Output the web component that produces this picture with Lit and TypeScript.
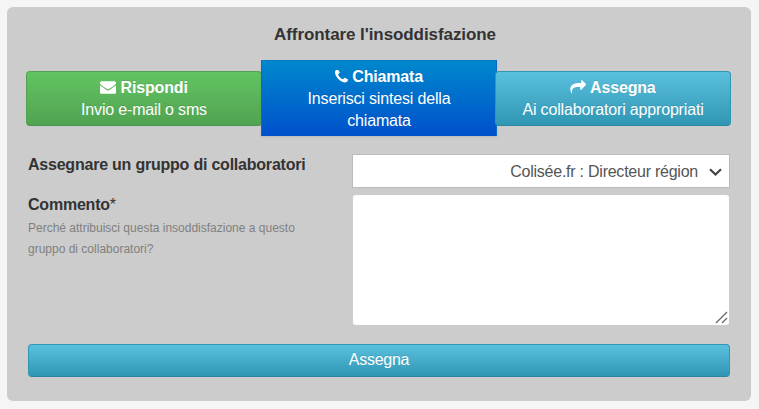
import { LitElement, html, css } from "lit";
import { customElement } from "lit/decorators.js";

@customElement("app-root")
export class AppRoot extends LitElement {
  static styles = css`
    :host {
      display: block;
      min-height: 409px;
      background: #f5f5f5;
      font-family: "Liberation Sans", Arial, sans-serif;
      color: #333;
      padding: 7px 8px 8px 7px;
      box-sizing: border-box;
    }

    .panel {
      background: #ccc;
      border-radius: 6px;
      height: 394px;
      padding: 0 21px 0 19px;
      box-sizing: border-box;
      overflow: hidden;
    }

    h3 {
      margin: 0;
      padding: 17px 0 0 14px;
      height: 53px;
      box-sizing: border-box;
      text-align: center;
      font-size: 17px;
      letter-spacing: -0.08px;
      line-height: 21px;
      font-weight: 700;
      color: #333;
    }

    .actions {
      display: flex;
      align-items: center;
      height: 76px;
    }

    .action {
      flex: none;
      width: 236px;
      height: 55px;
      box-sizing: border-box;
      border: 1px solid;
      border-radius: 4px;
      color: #fff;
      text-align: center;
      font-size: 16px;
      letter-spacing: -0.17px;
      line-height: 22px;
      padding-top: 5px;
      text-shadow: 0 -1px 0 rgba(0, 0, 0, 0.1);
    }

    .action b {
      display: block;
    }

    .action svg {
      width: 16px;
      height: 16px;
      fill: #fff;
      vertical-align: -2px;
    }

    .action svg.phone {
      width: 13px;
      height: 13px;
      vertical-align: -1px;
    }

    .green {
      background: linear-gradient(#62c462, #51a351);
      border-color: #51a351 #51a351 #4a934a;
    }

    .blue {
      position: relative;
      height: 76px;
      width: 236px;
      margin: 0 -2px 0 -1px;
      border-radius: 0;
      background: linear-gradient(#0088cc, #0051cc);
      border-color: #0a78c4 #0a6cc4 #0051cc;
      padding: 5px 30px 0;
      box-shadow: 0 1px 2px rgba(0, 0, 0, 0.1);
    }

    .cyan {
      position: relative;
      background: linear-gradient(#5bc0de, #2f96b4);
      border-color: #2f96b4 #2f96b4 #2a85a0;
    }

    .form {
      display: grid;
      grid-template-columns: 324px 378px;
      margin-top: 18px;
      padding-left: 2px;
    }

    .label {
      font-size: 16px;
      letter-spacing: -0.22px;
      line-height: 20px;
      font-weight: 700;
      color: #333;
    }

    .first {
      height: 41px;
      padding-top: 1px;
      box-sizing: border-box;
    }

    .hint {
      font-size: 12px;
      line-height: 21px;
      color: #808080;
      margin: 3px 0 0;
      width: 290px;
    }

    .req {
      font-weight: 400;
    }

    .select-wrap,
    .area-wrap {
      position: relative;
      height: 34px;
    }

    .area-wrap {
      height: 131px;
      padding-left: 1px;
    }

    select {
      display: block;
      width: 378px;
      height: 34px;
      box-sizing: border-box;
      appearance: none;
      background: #fff;
      border: 1px solid #bbb;
      border-radius: 0;
      padding: 0 31px 0 0;
      font-family: inherit;
      font-size: 16px;
      letter-spacing: -0.24px;
      color: #555;
      text-align-last: right;
      outline: none;
    }

    .chevron {
      position: absolute;
      right: 8px;
      top: 14px;
      width: 13px;
      height: 8px;
      fill: none;
      stroke: #444;
      stroke-width: 2.2;
      pointer-events: none;
    }

    textarea {
      display: block;
      width: 376px;
      height: 130px;
      box-sizing: border-box;
      background: #fff;
      border: 0;
      border-radius: 3px;
      margin: 0;
      padding: 6px;
      outline: none;
      resize: none;
      font-family: inherit;
    }

    .grip {
      position: absolute;
      right: 2px;
      bottom: 2px;
      width: 13px;
      height: 13px;
      stroke: #666;
      stroke-width: 1.3;
      pointer-events: none;
    }

    .submit {
      display: block;
      width: 702px;
      height: 33px;
      margin: 18px 0 0 2px;
      box-sizing: border-box;
      border: 1px solid #2f96b4;
      border-bottom-color: #2a85a0;
      border-radius: 4px;
      background: linear-gradient(#5bc0de, #2f96b4);
      color: #fff;
      font-family: inherit;
      font-size: 16px;
      letter-spacing: -0.25px;
      padding: 0 0 2px;
      text-shadow: 0 -1px 0 rgba(0, 0, 0, 0.1);
    }
  `;

  render() {
    return html`
      <div class="panel">
        <h3>Affrontare l'insoddisfazione</h3>
        <div class="actions">
          <div class="action green">
            <b
              ><svg viewBox="0 0 1792 1792">
                <path d="M1792 710v794q0 66-47 113t-113 47h-1472q-66 0-113-47t-47-113v-794q44 49 101 87 362 246 497 345 57 42 92.500 65.500t94.500 48 110 24.500h2q51 0 110-24.500t94.500-48 92.500-65.500q170-123 498-345 57-39 100-87zm0-294q0 79-49 151t-122 123q-376 261-468 325-10 7-42.500 30.500t-54 38-52 32.500-57.500 27-50 9h-2q-23 0-50-9t-57.500-27-52-32.500-54-38-42.500-30.500q-91-64-262-182.500t-205-142.500q-62-42-117-115.500t-55-136.500q0-78 41.500-130t118.500-52h1472q65 0 112.500 47t47.500 113z" />
              </svg>
              Rispondi</b
            >
            Invio e-mail o sms
          </div>
          <div class="action blue">
            <b
              ><svg class="phone" viewBox="192 192 1408 1408">
                <path d="M1600 1240q0 27-10 70.500t-21 68.500q-21 50-122 106-94 51-186 51-27 0-53-3.500t-57.500-12.500-47-14.500-55.500-20.500-49-18q-98-35-175-83-127-79-264-216t-216-264q-48-77-83-175-3-9-18-49t-20.500-55.500-14.500-47-12.500-57.500-3.500-53q0-92 51-186 56-101 106-122 25-11 68.500-21t70.500-10q14 0 21 3 18 6 53 76 11 19 30 54t35 63.500 31 53.500q3 4 17.500 25t21.500 35.500 7 28.500q0 20-28.500 50t-62 55-62 53-28.500 46q0 9 5 22.500t8.500 20.500 14 24 11.500 19q76 137 174 235t235 174q2 1 19 11.500t24 14 20.500 8.500 22.500 5q18 0 46-28.500t53-62 55-62 50-28.500q14 0 28.500 7t35.500 21.500 25 17.500q25 15 53.500 31t63 35 54 30q70 35 76 53 3 7 3 21z" />
              </svg>
              Chiamata</b
            >
            Inserisci sintesi della chiamata
          </div>
          <div class="action cyan">
            <b
              ><svg viewBox="0 0 1792 1792">
                <path d="M1792 640q0 26-19 45l-512 512q-19 19-45 19t-45-19-19-45v-256h-224q-98 0-175.500 6t-154 21.500-133 42.500-105.500 69.500-79 103-48 150.500-17 196q0 34 3 79 0 4 1.500 15.500t1.500 17.500q0 10-5.500 17t-15.500 7q-11 0-20-11.500t-15-27-12.500-27.500q-121-272-121-402 0-173 57-283 174-432 940-432h224v-256q0-26 19-45t45-19 45 19l512 512q19 19 19 45z" />
              </svg>
              Assegna</b
            >
            Ai collaboratori appropriati
          </div>
        </div>
        <div class="form">
          <div class="label first">Assegnare un gruppo di collaboratori</div>
          <div class="select-wrap">
            <select>
              <option>Colisée.fr : Directeur région</option>
            </select>
            <svg class="chevron" viewBox="0 0 13 8"><path d="M1 1.200l5.500 5.300L12 1.200" /></svg>
          </div>
          <div>
            <div class="label">Commento<span class="req">*</span></div>
            <p class="hint">
              Perché attribuisci questa insoddisfazione a questo gruppo di collaboratori?
            </p>
          </div>
          <div class="area-wrap">
            <textarea></textarea>
            <svg class="grip" viewBox="0 0 13 13"><path d="M1 12 12 1M7 12l5-5" /></svg>
          </div>
        </div>
        <button class="submit">Assegna</button>
      </div>
    `;
  }
}
